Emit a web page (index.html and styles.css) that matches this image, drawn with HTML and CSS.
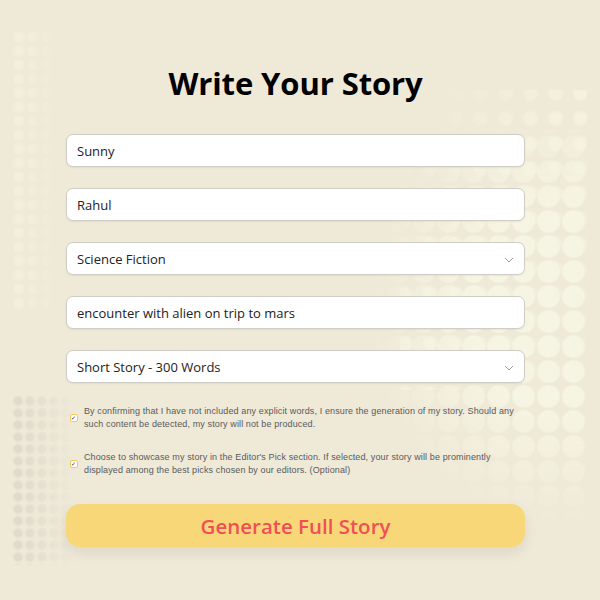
FILE: index.html
```html
<!DOCTYPE html>
<html lang="en">
<head>
<meta charset="UTF-8" />
<meta name="viewport" content="width=device-width, initial-scale=1" />
<title>Write Your Story</title>
<link rel="stylesheet" href="styles.css">
</head>
<body>

<div class="page">
  <!-- halftone dots behind the form -->
  <div class="dots dots-right"></div>
  <div class="dots dots-right-small"></div>
  <div class="dots dots-left"></div>
  <div class="dots dots-top"></div>

  <main class="story">
    <h1>Write Your Story</h1>

    <form id="story-form">
      <input type="text" class="field" value="Sunny" placeholder="Your name" />
      <input type="text" class="field" value="Rahul" placeholder="Friend's name" />

      <div class="select-wrap">
        <select class="field">
          <option selected>Science Fiction</option>
          <option>Fantasy</option>
          <option>Mystery</option>
          <option>Adventure</option>
        </select>
        <svg class="chevron" width="10" height="6" viewBox="0 0 10 6"><path d="M1 1l4 4 4-4" fill="none" stroke="#9a9a9a" stroke-width="1"/></svg>
      </div>

      <input type="text" class="field" value="encounter with alien on trip to mars" placeholder="Story plot" />

      <div class="select-wrap">
        <select class="field">
          <option selected>Short Story - 300 Words</option>
          <option>Medium Story - 600 Words</option>
          <option>Long Story - 1000 Words</option>
        </select>
        <svg class="chevron" width="10" height="6" viewBox="0 0 10 6"><path d="M1 1l4 4 4-4" fill="none" stroke="#9a9a9a" stroke-width="1"/></svg>
      </div>

      <label class="check">
        <span class="box">&#10003;</span>
        <span>By confirming that I have not included any explicit words, I ensure the generation of my story. Should any such content be detected, my story will not be produced.</span>
      </label>

      <label class="check">
        <span class="box">&#10003;</span>
        <span>Choose to showcase my story in the Editor's Pick section. If selected, your story will be prominently displayed among the best picks chosen by our editors. (Optional)</span>
      </label>

      <button type="submit" class="generate-btn">Generate Full Story</button>
    </form>
  </main>
</div>

</body>
</html>
```

FILE: styles.css
```css
:root {
  --paper: #efe9d8;
  --dot-light: #f6f4e2;
  --dot-grey: #e0dccd;
  --yellow: #f8d778;
  --red: #f04f57;
}
body {
  margin: 0; padding: 0;
  font-family: "Open Sans", Arial, sans-serif;
  background-color: var(--paper);
  color: #000;
}
.page {
  position: relative;
  height: 600px;
  overflow: hidden;
}

/* Halftone decoration */
.dots {
  position: absolute;
  pointer-events: none;
}
.dots-right {
  left: 280px; top: 130px;
  width: 307px; height: 400px;
  background-image: radial-gradient(circle closest-side, var(--dot-light) 82%, transparent 100%);
  background-size: 25px 25px;
  background-position: 6px 4px;
  -webkit-mask-image: radial-gradient(ellipse 65% 55% at 92% 45%, #000 45%, transparent 100%);
  mask-image: radial-gradient(ellipse 65% 55% at 92% 45%, #000 45%, transparent 100%);
}
.dots-right-small {
  left: 400px; top: 90px;
  width: 187px; height: 300px;
  background-image: radial-gradient(circle closest-side, var(--dot-light) 45%, transparent 70%);
  background-size: 25px 25px;
  background-position: 18px 16px;
  -webkit-mask-image: linear-gradient(to bottom right, transparent 10%, #000 50%, transparent 95%);
  mask-image: linear-gradient(to bottom right, transparent 10%, #000 50%, transparent 95%);
  opacity: 0.8;
}
.dots-left {
  left: 12px; top: 395px;
  width: 64px; height: 170px;
  background-image: radial-gradient(circle closest-side, var(--dot-grey) 55%, transparent 100%);
  background-size: 12px 12px;
  -webkit-mask-image: linear-gradient(to right, #000 15%, transparent 100%);
  mask-image: linear-gradient(to right, #000 15%, transparent 100%);
}
.dots-top {
  left: 12px; top: 30px;
  width: 48px; height: 280px;
  background-image: radial-gradient(circle closest-side, var(--dot-light) 45%, transparent 100%);
  background-size: 14px 14px;
  opacity: 0.6;
  -webkit-mask-image: linear-gradient(to right, #000 10%, transparent 100%);
  mask-image: linear-gradient(to right, #000 10%, transparent 100%);
}

main.story {
  position: relative;
  width: 459px;
  padding-top: 61px;
  margin-left: 66px;
}
h1 {
  margin: 0 0 29px;
  text-align: center;
  font-size: 31px;
  font-weight: 700;
  line-height: 44px;
  letter-spacing: -0.1px;
}

form {
  display: flex;
  flex-direction: column;
  gap: 21px;
}
.field {
  box-sizing: border-box;
  width: 100%;
  height: 33px;
  padding: 0 10px;
  font-family: "Open Sans", Arial, sans-serif;
  font-size: 13px;
  color: #222;
  background-color: #fff;
  border: 1px solid #cfcdc6;
  border-radius: 7px;
  outline: none;
  box-shadow: 0 1px 2px rgba(0,0,0,0.06);
}
.select-wrap {
  position: relative;
}
select.field {
  appearance: none;
  -webkit-appearance: none;
}
.chevron {
  position: absolute;
  right: 11px;
  top: 15px;
}

/* Agreement checkboxes */
.check {
  display: flex;
  align-items: center;
  gap: 6px;
  margin-top: 1px;
  padding-left: 4px;
  padding-right: 8px;
  font-family: "Liberation Sans", Arial, sans-serif;
  font-size: 9px;
  line-height: 12.5px;
  letter-spacing: 0.12px;
  color: #5a5a5a;
}
.check + .check {
  margin-top: 0;
}
.box {
  flex: none;
  box-sizing: border-box;
  width: 8px;
  height: 8px;
  border: 1px solid #f3c95a;
  border-radius: 2px;
  background-color: #fff;
  font-size: 6px;
  line-height: 6px;
  text-align: center;
  color: #333;
}

.generate-btn {
  margin-top: 7px;
  height: 43px;
  border: none;
  border-radius: 14px;
  background-color: var(--yellow);
  color: var(--red);
  font-family: "Open Sans", Arial, sans-serif;
  font-size: 20.5px;
  font-weight: 600;
  cursor: pointer;
  box-shadow: 0 6px 14px rgba(0,0,0,0.08);
}
```
